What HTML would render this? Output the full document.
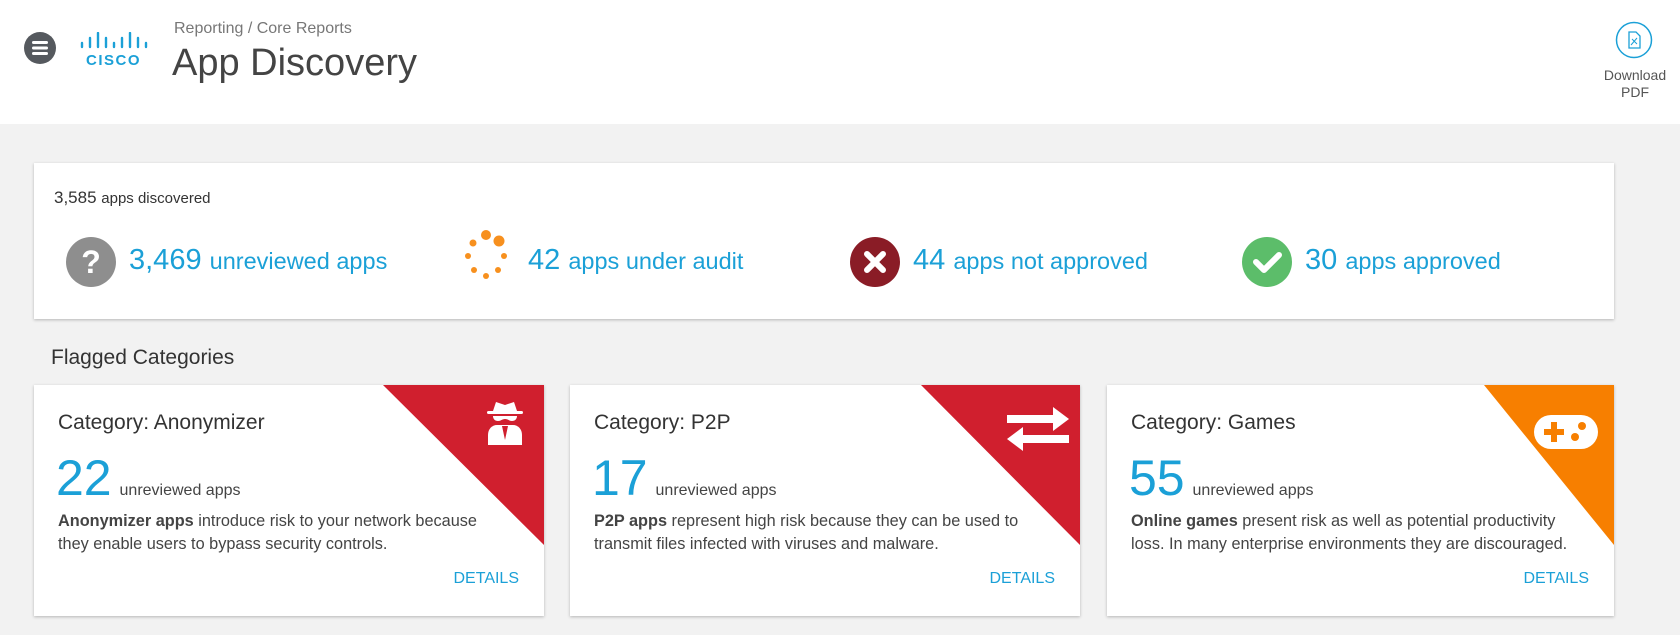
<!DOCTYPE html>
<html><head><meta charset="utf-8"><style>
*{margin:0;padding:0;box-sizing:border-box}
body{width:1680px;height:635px;background:#f2f2f2;font-family:"Liberation Sans",sans-serif;position:relative;overflow:hidden;color:#333}
.a{position:absolute;white-space:nowrap}
.hdr{position:absolute;left:0;top:0;width:1680px;height:124px;background:#fff}
.card{position:absolute;background:#fff;box-shadow:0 1px 3px rgba(0,0,0,.25);overflow:hidden}
.blue{color:#1ba0d7}
.tri{position:absolute;top:0;right:0}
.ct{font-size:21px;color:#333}
.big{font-size:50px;color:#1ba0d7;font-weight:300}
.sm{font-size:16px;color:#444;margin-left:-6px}
.desc{font-size:16.3px;line-height:23px;color:#444}
.det{font-size:16px;color:#1ba0d7}
.st{font-size:29px}
.st span{font-size:23.5px}
</style></head><body>
<div class="hdr"></div>
<svg class="a" style="left:24px;top:32px" width="32" height="32" viewBox="0 0 32 32"><circle cx="16" cy="16" r="16" fill="#55595e"/><rect x="8" y="9" width="16" height="3" rx="1.5" fill="#fff"/><rect x="8" y="14.5" width="16" height="3" rx="1.5" fill="#fff"/><rect x="8" y="20" width="16" height="3" rx="1.5" fill="#fff"/></svg>
<svg class="a" style="left:80px;top:32px" width="70" height="20" viewBox="0 0 70 20"><g stroke="#1ba0d7" stroke-width="2.4" stroke-linecap="round"><line x1="2" y1="11" x2="2" y2="15"/><line x1="10" y1="6" x2="10" y2="15"/><line x1="18" y1="1" x2="18" y2="15"/><line x1="26" y1="6" x2="26" y2="15"/><line x1="34" y1="11" x2="34" y2="15"/><line x1="42" y1="6" x2="42" y2="15"/><line x1="50" y1="1" x2="50" y2="15"/><line x1="58" y1="6" x2="58" y2="15"/><line x1="66" y1="11" x2="66" y2="15"/></g></svg>
<div class="a" style="left:86px;top:52px;font-size:15px;font-weight:bold;color:#1ba0d7;letter-spacing:1.5px">CISCO</div>
<div class="a" style="left:174px;top:20px;font-size:16px;color:#777">Reporting / Core Reports</div>
<div class="a" style="left:172px;top:42px;font-size:38px;color:#444;font-weight:300">App Discovery</div>
<svg class="a" style="left:1615px;top:21px" width="38" height="38" viewBox="0 0 38 38"><circle cx="19" cy="19" r="17.5" fill="none" stroke="#1ba0d7" stroke-width="1.5"/><path d="M14 11h7l4 4v12h-11z" fill="none" stroke="#1ba0d7" stroke-width="1.3"/><path d="M16 24l6-7M17 18l5 5" stroke="#1ba0d7" stroke-width="1"/></svg>
<div class="a" style="left:1600px;top:67px;font-size:14px;color:#555;width:70px;text-align:center;line-height:17px">Download<br>PDF</div>

<div class="card" style="left:34px;top:163px;width:1580px;height:156px"></div>
<div class="a" style="left:54px;top:188px;font-size:17px;color:#333">3,585 <span style="font-size:15px">apps discovered</span></div>
<svg class="a" style="left:66px;top:237px" width="50" height="50" viewBox="0 0 50 50"><circle cx="25" cy="25" r="25" fill="#8e8e8e"/><text x="25" y="36" text-anchor="middle" font-family="Liberation Sans" font-weight="bold" font-size="32" fill="#fff">?</text></svg>
<div class="a blue st" style="left:129px;top:244px">3,469 <span>unreviewed apps</span></div>
<svg class="a" style="left:460px;top:230px" width="52" height="56" viewBox="0 0 52 56"><g fill="#f7901e"><circle cx="26" cy="5" r="5"/><circle cx="39" cy="11" r="5.5"/><circle cx="44" cy="26" r="3"/><circle cx="38" cy="40" r="3"/><circle cx="26" cy="46" r="3"/><circle cx="14" cy="40" r="3"/><circle cx="8" cy="26" r="3"/><circle cx="13" cy="13" r="3.5"/></g></svg>
<div class="a blue st" style="left:528px;top:244px">42 <span>apps under audit</span></div>
<svg class="a" style="left:850px;top:237px" width="50" height="50" viewBox="0 0 50 50"><circle cx="25" cy="25" r="25" fill="#8a1c26"/><path d="M17 17l16 16M33 17l-16 16" stroke="#fff" stroke-width="6" stroke-linecap="round"/></svg>
<div class="a blue st" style="left:913px;top:244px">44 <span>apps not approved</span></div>
<svg class="a" style="left:1242px;top:237px" width="50" height="50" viewBox="0 0 50 50"><circle cx="25" cy="25" r="25" fill="#5cbd6a"/><path d="M14 25l8 8 15-15" fill="none" stroke="#fff" stroke-width="6" stroke-linecap="round" stroke-linejoin="round"/></svg>
<div class="a blue st" style="left:1305px;top:244px">30 <span>apps approved</span></div>

<div class="a" style="left:51px;top:346px;font-size:21px;color:#333">Flagged Categories</div>

<div class="card" style="left:34px;top:385px;width:510px;height:231px">
<svg class="tri" width="161" height="160"><polygon points="0,0 161,0 161,160" fill="#d01f2e"/></svg>
<svg class="a" style="left:450px;top:16px" width="42" height="44" viewBox="0 0 42 44"><g fill="#fff"><path d="M9 10h24l-3-9-9 3-9-3z"/><rect x="3" y="10" width="36" height="3" rx="1.5"/><path d="M9 15h24c0 3-2 5-5 5-3 0-4-2-7-2s-4 2-7 2c-3 0-5-2-5-5z"/><path d="M4 44V34c0-6 4-10 9-10h16c5 0 9 4 9 10v10z"/></g><path d="M18 25l3 14 3-14" fill="#d01f2e"/></svg>
<div class="a ct" style="left:24px;top:26px">Category: Anonymizer</div>
<div class="a big" style="left:22px;top:64px">22 <span class="sm">unreviewed apps</span></div>
<div class="a desc" style="left:24px;top:125px"><b>Anonymizer apps</b> introduce risk to your network because<br>they enable users to bypass security controls.</div>
<div class="a det" style="right:25px;top:185px">DETAILS</div>
</div>

<div class="card" style="left:570px;top:385px;width:510px;height:231px">
<svg class="tri" width="159" height="160"><polygon points="0,0 159,0 159,160" fill="#d01f2e"/></svg>
<svg class="a" style="left:437px;top:22px" width="62" height="44" viewBox="0 0 62 44"><g fill="#fff"><rect x="0" y="8" width="48" height="8"/><polygon points="46,0 62,12 46,24"/><rect x="14" y="28" width="48" height="8"/><polygon points="16,20 0,32 16,44"/></g></svg>
<div class="a ct" style="left:24px;top:26px">Category: P2P</div>
<div class="a big" style="left:22px;top:64px">17 <span class="sm">unreviewed apps</span></div>
<div class="a desc" style="left:24px;top:125px"><b>P2P apps</b> represent high risk because they can be used to<br>transmit files infected with viruses and malware.</div>
<div class="a det" style="right:25px;top:185px">DETAILS</div>
</div>

<div class="card" style="left:1107px;top:385px;width:507px;height:231px">
<svg class="tri" width="130" height="160"><polygon points="0,0 130,0 130,160" fill="#f77f00"/></svg>
<svg class="a" style="left:427px;top:30px" width="64" height="34" viewBox="0 0 64 34"><rect x="0" y="0" width="64" height="34" rx="17" fill="#fff"/><g fill="#f77f00"><rect x="10" y="14" width="20" height="6"/><rect x="17" y="7" width="6" height="20"/><circle cx="48" cy="11" r="4"/><circle cx="41" cy="22" r="4"/></g></svg>
<div class="a ct" style="left:24px;top:26px">Category: Games</div>
<div class="a big" style="left:22px;top:64px">55 <span class="sm">unreviewed apps</span></div>
<div class="a desc" style="left:24px;top:125px"><b>Online games</b> present risk as well as potential productivity<br>loss. In many enterprise environments they are discouraged.</div>
<div class="a det" style="right:25px;top:185px">DETAILS</div>
</div>
</body></html>
